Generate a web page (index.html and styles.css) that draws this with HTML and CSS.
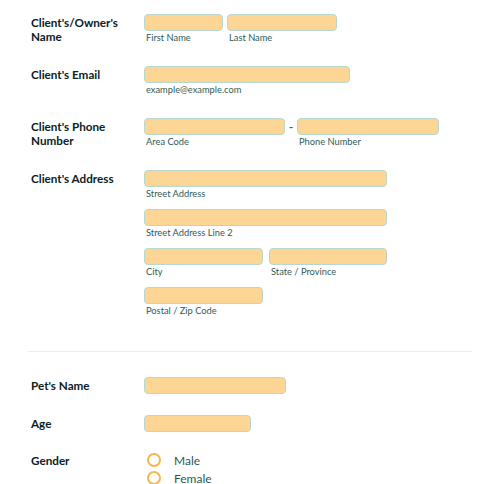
FILE: index.html
```html
<!DOCTYPE html>
<html lang="en">
<head>
<meta charset="utf-8">
<title>Pet Form</title>
<link rel="stylesheet" href="styles.css">
</head>
<body>
<form class="form">
  <div class="row">
    <div class="label">Client's/Owner's<br>Name</div>
    <div class="fields">
      <div class="line">
        <div class="field"><input class="input w79" type="text"><div class="sub">First Name</div></div>
        <div class="field"><input class="input w110" type="text"><div class="sub">Last Name</div></div>
      </div>
    </div>
  </div>
  <div class="row">
    <div class="label">Client's Email</div>
    <div class="fields">
      <div class="field"><input class="input w206" type="text"><div class="sub">example@example.com</div></div>
    </div>
  </div>
  <div class="row">
    <div class="label">Client's Phone<br>Number</div>
    <div class="fields">
      <div class="line nogap">
        <div class="field"><input class="input w141" type="text"><div class="sub">Area Code</div></div>
        <div class="dash">-</div>
        <div class="field"><input class="input w142" type="text"><div class="sub">Phone Number</div></div>
      </div>
    </div>
  </div>
  <div class="row">
    <div class="label">Client's Address</div>
    <div class="fields">
      <div class="field"><input class="input w243" type="text"><div class="sub">Street Address</div></div>
      <div class="field"><input class="input w243" type="text"><div class="sub">Street Address Line 2</div></div>
      <div class="line wide">
        <div class="field"><input class="input w119" type="text"><div class="sub">City</div></div>
        <div class="field"><input class="input w118" type="text"><div class="sub">State / Province</div></div>
      </div>
      <div class="field"><input class="input w119" type="text"><div class="sub">Postal / Zip Code</div></div>
    </div>
  </div>
  <hr class="divider">
  <div class="row pet">
    <div class="label">Pet's Name</div>
    <div class="fields"><input class="input w142" type="text"></div>
  </div>
  <div class="row age">
    <div class="label">Age</div>
    <div class="fields"><input class="input w107" type="text"></div>
  </div>
  <div class="row gender">
    <div class="label">Gender</div>
    <div class="radios">
      <label class="radio"><span class="circle"></span>Male</label>
      <label class="radio"><span class="circle"></span>Female</label>
    </div>
  </div>
</form>
</body>
</html>
```
FILE: styles.css
```css
html, body {
  margin: 0;
  padding: 0;
  background: #ffffff;
  overflow: hidden;
}
body {
  font-family: "Lato", "Open Sans", sans-serif;
}
.form {
  padding: 14px 28px 0;
  margin: 0;
}
.row {
  display: flex;
  align-items: flex-start;
  margin-bottom: 22px;
}
.label {
  flex: 0 0 116px;
  box-sizing: border-box;
  padding: 2px 0 0 3px;
  font-size: 11.7px;
  line-height: 13.5px;
  font-weight: 700;
  color: #0a211e;
}
.fields {
  display: flex;
  flex-direction: column;
  gap: 9px;
}
.line {
  display: flex;
  gap: 4px;
  align-items: flex-start;
}
.line.wide {
  gap: 6px;
}
.line.nogap {
  gap: 0;
}
.field {
  display: flex;
  flex-direction: column;
}
.input {
  display: block;
  box-sizing: border-box;
  height: 17px;
  margin: 0;
  padding: 0;
  border: 1px solid #b8d8cd;
  border-radius: 4px;
  background: #fdd594;
  outline: none;
}
.w79 { width: 79px; }
.w107 { width: 107px; }
.w110 { width: 110px; }
.w118 { width: 118px; }
.w119 { width: 119px; }
.w141 { width: 141px; }
.w142 { width: 142px; }
.w206 { width: 206px; }
.w243 { width: 243px; }
.sub {
  margin-top: 1px;
  padding-left: 2px;
  font-size: 9.3px;
  line-height: 12px;
  color: #2e5c56;
}
.dash {
  width: 12px;
  text-align: center;
  font-size: 11px;
  font-weight: 700;
  line-height: 18px;
  color: #2e5c56;
}
.divider {
  margin: 34px 0 25px;
  border: 0;
  border-top: 1px solid #e6efec;
  height: 0;
}
.row.pet {
  margin-bottom: 21px;
}
.row.age {
  margin-bottom: 19px;
}
.row.gender .label {
  padding-top: 3px;
}
.radios {
  display: flex;
  flex-direction: column;
}
.radio {
  display: flex;
  align-items: center;
  height: 18px;
  font-size: 12px;
  color: #2a5a52;
}
.circle {
  display: block;
  box-sizing: border-box;
  width: 14px;
  height: 14px;
  margin: 0 13px 0 3px;
  border: 2px solid #f7b650;
  border-radius: 50%;
}
```
